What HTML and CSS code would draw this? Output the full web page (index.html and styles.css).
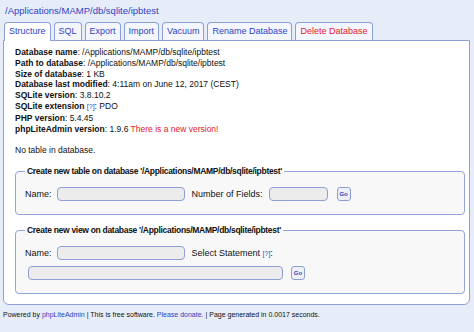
FILE: index.html
```html
<!DOCTYPE html>
<html lang="en">
<head>
    <meta charset="UTF-8">
    <title>phpLiteAdmin</title>
    <link rel="stylesheet" href="styles.css">
</head>
<body class="page">
    <div class="db_title"><a href="#">/Applications/MAMP/db/sqlite/ipbtest</a></div>

    <div class="tabs">
        <a class="tab active" href="#">Structure</a>
        <a class="tab" href="#">SQL</a>
        <a class="tab" href="#">Export</a>
        <a class="tab" href="#">Import</a>
        <a class="tab" href="#">Vacuum</a>
        <a class="tab" href="#">Rename Database</a>
        <a class="tab danger" href="#">Delete Database</a>
    </div>

    <div class="panel">
        <div class="info">
            <div><b>Database name</b>: /Applications/MAMP/db/sqlite/ipbtest</div>
            <div><b>Path to database</b>: /Applications/MAMP/db/sqlite/ipbtest</div>
            <div><b>Size of database</b>: 1 KB</div>
            <div><b>Database last modified</b>: 4:11am on June 12, 2017 (CEST)</div>
            <div><b>SQLite version</b>: 3.8.10.2</div>
            <div><b>SQLite extension</b> <a class="help" href="#">[?]</a>: PDO</div>
            <div><b>PHP version</b>: 5.4.45</div>
            <div><b>phpLiteAdmin version</b>: 1.9.6 <span class="new_version">There is a new version!</span></div>
        </div>

        <p class="no_table">No table in database.</p>

        <fieldset class="box">
            <legend>Create new table on database '/Applications/MAMP/db/sqlite/ipbtest'</legend>
            <div class="row">
                <span class="label">Name:</span>
                <input class="field name_field" type="text">
                <span class="label second">Number of Fields:</span>
                <input class="field num_field" type="text">
                <button class="go">Go</button>
            </div>
        </fieldset>

        <fieldset class="box">
            <legend>Create new view on database '/Applications/MAMP/db/sqlite/ipbtest'</legend>
            <div class="row">
                <span class="label">Name:</span>
                <input class="field name_field" type="text">
                <span class="label second">Select Statement <a class="help" href="#">[?]</a>:</span>
            </div>
            <div class="row row2">
                <input class="field select_field" type="text">
                <button class="go">Go</button>
            </div>
        </fieldset>
    </div>

    <div class="footer">
        Powered by <a href="#">phpLiteAdmin</a> | This is free software. <a href="#">Please donate.</a> | Page generated in 0.0017 seconds.
    </div>
</body>
</html>
```

FILE: styles.css
```css
body {
    margin: 0;
}
.page {
    background: #e6edf8;
    font-family: "Liberation Sans", Arial, sans-serif;
    font-size: 8.5px;
    color: #111;
}
a {
    color: #2f3fc4;
    text-decoration: none;
}
.db_title {
    padding: 5px 0 0 5px;
    font-size: 9.5px;
    line-height: 11px;
}
.tabs {
    display: flex;
    gap: 3px;
    padding: 6px 0 0 4px;
    position: relative;
    z-index: 1;
    font-size: 9px;
}
.tab {
    display: block;
    height: 17px;
    line-height: 17px;
    padding: 0 4px;
    border: 1px solid #8e9fd6;
    border-bottom: none;
    border-radius: 4px 4px 0 0;
    background: #f3f6fc;
    margin-bottom: -1px;
}
.tab.active {
    background: #fff;
    height: 18px;
}
.tab.danger {
    color: #e3202a;
}
.panel {
    margin: 0 4px 0 3px;
    background: #fff;
    border: 1px solid #8e9fd6;
    border-radius: 0 0 6px 6px;
    padding: 6px 4px 10px 11px;
}
.info {
    line-height: 10.8px;
}
.help {
    font-size: 7px;
}
.new_version {
    color: #e3202a;
}
.no_table {
    margin: 11px 0 0 0;
    line-height: 11px;
}
.box {
    margin: 10px 0 0 0;
    border: 1px solid #93a4da;
    border-radius: 4px;
    background: #f8f8f9;
    padding: 10px 10px 13px 9px;
}
.box + .box {
    margin-top: 10px;
}
.box legend {
    font-size: 8.5px;
    letter-spacing: -0.3px;
    font-weight: bold;
    padding: 0 2px;
    line-height: 11px;
}
.row {
    display: flex;
    align-items: center;
    height: 14px;
    font-size: 9px;
}
.row2 {
    margin-top: 6px;
}
.label.second {
    margin-left: 7px;
}
.field {
    height: 14px;
    box-sizing: border-box;
    border: 1px solid #8e9fd6;
    border-radius: 4px;
    background: #ececec;
    padding: 0;
    margin: 0;
}
.name_field {
    width: 128px;
    margin-left: 5px;
}
.num_field {
    width: 59px;
    margin-left: 6px;
}
.select_field {
    width: 255px;
    margin-left: 3px;
}
.go {
    width: 14px;
    height: 14px;
    padding: 0;
    margin-left: 9px;
    border: 1px solid #8e9fd6;
    border-radius: 3px;
    background: #eef0f6;
    font-family: "Liberation Sans", Arial, sans-serif;
    font-size: 6px;
    font-weight: bold;
    color: #2f3fc4;
}
.row2 .go {
    margin-left: 8px;
}
.footer {
    padding: 5px 0 0 3px;
    font-size: 7px;
    line-height: 9px;
}
```
